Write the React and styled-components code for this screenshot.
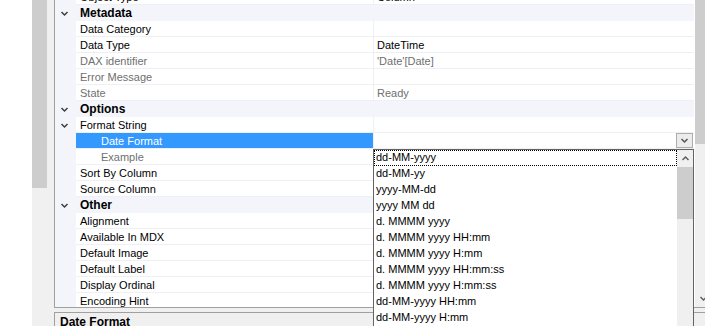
import React from "react";
import styled, { createGlobalStyle } from "styled-components";

const GlobalStyle = createGlobalStyle`
  html, body { margin: 0; padding: 0; background: #fff; }
  body { font-family: "Liberation Sans", Arial, sans-serif; font-size: 11px; color: #000; }
`;

const Screen = styled.div`
  position: relative;
  display: flex;
  width: 705px;
  height: 326px;
  overflow: hidden;
  background: #fff;
`;

const SideGap = styled.div`
  width: 32px;
  flex: none;
`;

const SideScroll = styled.div`
  width: 15px;
  flex: none;
  display: flex;
  flex-direction: column;
  background: #f0f0f0;
`;

const Thumb = styled.div`
  height: ${(p) => p.$h}px;
  background: #cdcdcd;
  flex: none;
`;

const Frame = styled.div`
  flex: none;
  width: 665px;
  display: flex;
  flex-direction: column;
  gap: 4px;
  padding-left: 7px;
  background: #f0f0f0;
`;

const Grid = styled.div`
  display: flex;
  height: 308px;
  flex: none;
  border-left: 1px solid #a0a0a0;
  border-bottom: 1px solid #a0a0a0;
  box-sizing: border-box;
`;

const GridBody = styled.div`
  width: 640px;
  flex: none;
  overflow: hidden;
  background: #fff;
`;

const Rows = styled.div`
  margin-top: -11px;
  padding-right: 1px;
`;

const Row = styled.div`
  display: grid;
  grid-template-columns: 21px 298px 1fr;
  height: 16px;
  line-height: 16px;
  background: #f3f5fa;
`;

const Gutter = styled.div`
  display: flex;
  align-items: center;
  justify-content: center;
  padding-right: 2px;
`;

const NameCell = styled.div`
  background: ${(p) => (p.$selected ? "#3399ff" : "#fff")};
  color: ${(p) => (p.$selected ? "#fff" : p.$dim ? "#6f6f6f" : "#000")};
  padding-left: ${(p) => (p.$child ? 25 : 4)}px;
  border-bottom: 1px solid #eef0f5;
  border-right: 1px solid #eef0f5;
  white-space: nowrap;
  overflow: hidden;
`;

const ValueCell = styled.div`
  position: relative;
  background: #fff;
  color: ${(p) => (p.$dim ? "#6f6f6f" : "#000")};
  padding-left: 3px;
  border-bottom: 1px solid #eef0f5;
  white-space: nowrap;
  overflow: hidden;
`;

const CategoryLabel = styled.div`
  grid-column: 2 / 4;
  font-weight: bold;
  font-size: 12px;
  padding-left: 4px;
  border-bottom: 1px solid #f3f5fa;
`;

const DropButton = styled.div`
  position: absolute;
  right: 1px;
  top: 0;
  width: 15px;
  height: 13px;
  border: 1px solid #adadad;
  background: #ececec;
  display: flex;
  align-items: center;
  justify-content: center;
`;

const ScrollBar = styled.div`
  width: 17px;
  flex: none;
  display: flex;
  flex-direction: column;
  background: #f0f0f0;
`;

const ScrollSpacer = styled.div`
  flex: 1;
`;

const ArrowBox = styled.div`
  height: 17px;
  flex: none;
  display: flex;
  align-items: center;
  justify-content: center;
`;

const Description = styled.div`
  flex: 1;
  border-top: 1px solid #a0a0a0;
  border-left: 1px solid #a0a0a0;
  padding: 2px 5px;
  font-weight: bold;
  font-size: 12px;
  line-height: 15px;
`;

const DropList = styled.div`
  position: absolute;
  left: 373px;
  top: 149px;
  width: 321px;
  height: 220px;
  box-sizing: border-box;
  border: 1px solid #646464;
  background: #fff;
  display: flex;
`;

const Items = styled.div`
  flex: 1;
  overflow: hidden;
`;

const Item = styled.div`
  height: 16px;
  line-height: 15px;
  padding-left: 2px;
  white-space: nowrap;
  box-sizing: border-box;
  outline: ${(p) => (p.$focus ? "1px dotted #000" : "none")};
  outline-offset: -1px;
`;

const ListScroll = styled.div`
  width: 16px;
  flex: none;
  display: flex;
  flex-direction: column;
  background: #f0f0f0;
`;

const Chevron = ({ up, color = "#404040", size = 9 }) => (
  <svg width={size} height={size} viewBox="0 0 9 9">
    <path
      d={up ? "M1.5 6 L4.5 3 L7.5 6" : "M1.5 3 L4.5 6 L7.5 3"}
      fill="none"
      stroke={color}
      strokeWidth="1.5"
    />
  </svg>
);

const rows = [
  { name: "Object Type", value: "Column" },
  { cat: "Metadata" },
  { name: "Data Category" },
  { name: "Data Type", value: "DateTime" },
  { name: "DAX identifier", value: "'Date'[Date]", dim: true },
  { name: "Error Message", dim: true },
  { name: "State", value: "Ready", dim: true },
  { cat: "Options" },
  { name: "Format String", expand: true },
  { name: "Date Format", child: true, selected: true },
  { name: "Example", child: true, dim: true },
  { name: "Sort By Column" },
  { name: "Source Column" },
  { cat: "Other" },
  { name: "Alignment" },
  { name: "Available In MDX" },
  { name: "Default Image" },
  { name: "Default Label" },
  { name: "Display Ordinal" },
  { name: "Encoding Hint" },
];

const formats = [
  "dd-MM-yyyy",
  "dd-MM-yy",
  "yyyy-MM-dd",
  "yyyy MM dd",
  "d. MMMM yyyy",
  "d. MMMM yyyy HH:mm",
  "d. MMMM yyyy H:mm",
  "d. MMMM yyyy HH:mm:ss",
  "d. MMMM yyyy H:mm:ss",
  "dd-MM-yyyy HH:mm",
  "dd-MM-yyyy H:mm",
  "dd-MM-yy HH:mm",
  "dd-MM-yy H:mm",
];

export default function App() {
  return (
    <>
      <GlobalStyle />
      <Screen>
        <SideGap />
        <SideScroll>
          <Thumb $h={188} />
        </SideScroll>
        <Frame>
          <Grid>
            <GridBody>
              <Rows>
                {rows.map((r, i) =>
                  r.cat ? (
                    <Row key={i}>
                      <Gutter>
                        <Chevron />
                      </Gutter>
                      <CategoryLabel>{r.cat}</CategoryLabel>
                    </Row>
                  ) : (
                    <Row key={i}>
                      <Gutter>{r.expand && <Chevron />}</Gutter>
                      <NameCell $dim={r.dim} $child={r.child} $selected={r.selected}>
                        {r.name}
                      </NameCell>
                      <ValueCell $dim={r.dim}>
                        {r.value}
                        {r.selected && (
                          <DropButton>
                            <Chevron color="#555" />
                          </DropButton>
                        )}
                      </ValueCell>
                    </Row>
                  )
                )}
              </Rows>
            </GridBody>
            <ScrollBar>
              <Thumb $h={144} />
              <ScrollSpacer />
              <ArrowBox>
                <Chevron color="#606060" />
              </ArrowBox>
            </ScrollBar>
          </Grid>
          <Description>Date Format</Description>
        </Frame>
        <DropList>
          <Items>
            {formats.map((f, i) => (
              <Item key={f} $focus={i === 0}>
                {f}
              </Item>
            ))}
          </Items>
          <ListScroll>
            <ArrowBox>
              <Chevron up color="#606060" />
            </ArrowBox>
            <Thumb $h={52} />
          </ListScroll>
        </DropList>
      </Screen>
    </>
  );
}
